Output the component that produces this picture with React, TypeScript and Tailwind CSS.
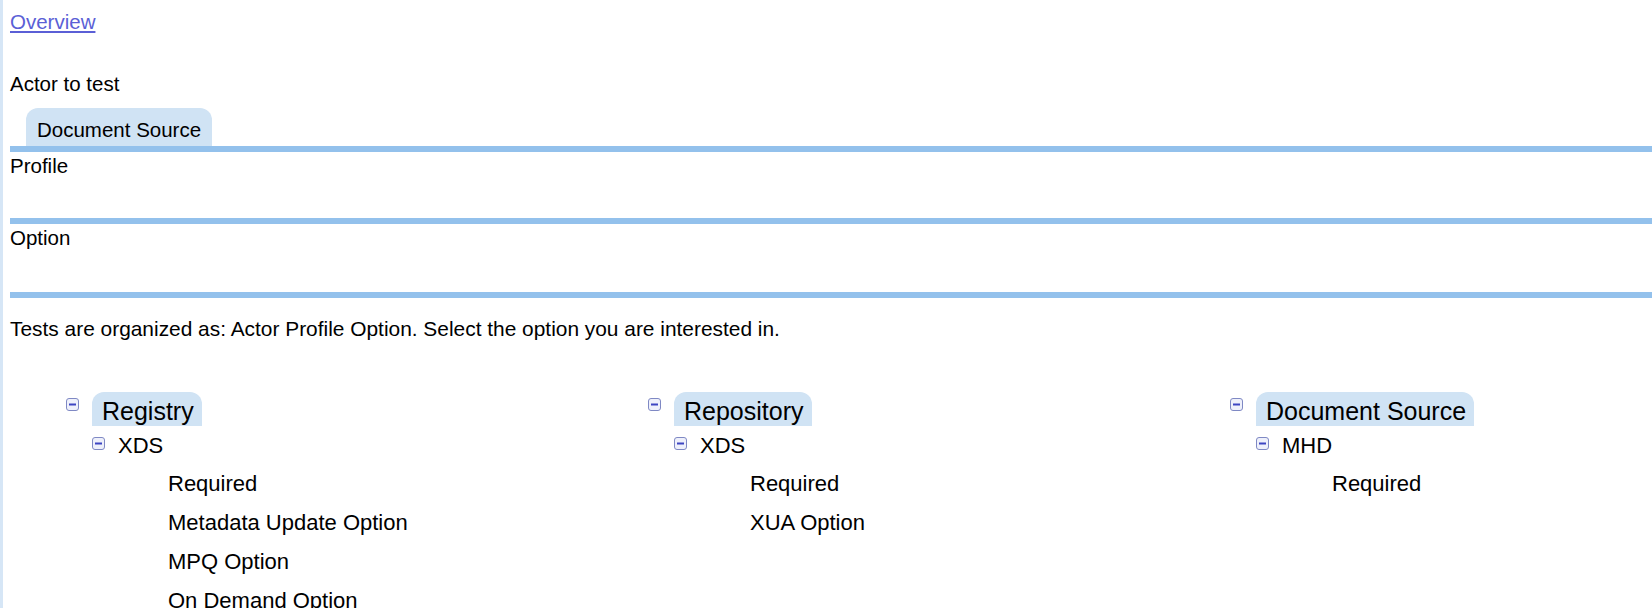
import React from "react";

const font = { fontFamily: '"Liberation Sans", Arial, Helvetica, sans-serif' };

function MinusIcon() {
  return (
    <svg width="13" height="13" viewBox="0 0 13 13" className="shrink-0">
      <rect x="0.5" y="0.5" width="12" height="12" rx="2.5" fill="#eef0fb" stroke="#7f89c4" />
      <rect x="3" y="5.5" width="7" height="2" fill="#3d45c2" />
    </svg>
  );
}

type Col = { title: string; group: string; items: string[] };

const cols: Col[] = [
  {
    title: "Registry",
    group: "XDS",
    items: ["Required", "Metadata Update Option", "MPQ Option", "On Demand Option"],
  },
  { title: "Repository", group: "XDS", items: ["Required", "XUA Option"] },
  { title: "Document Source", group: "MHD", items: ["Required"] },
];

function TreeCol({ col }: { col: Col }) {
  return (
    <div className="w-[582px] shrink-0">
      <div className="flex h-[41px] items-start">
        <div className="mt-[6px]">
          <MinusIcon />
        </div>
        <div className="ml-[13px] h-[34px] rounded-t-[12px] bg-[#d0e3f4] pl-[10px] pr-[8px] pt-[4px] text-[25px] leading-[30px] text-black">
          {col.title}
        </div>
      </div>
      <div className="pl-[26px]">
        <div className="flex h-[38px] items-start">
          <div className="mt-[4px]">
            <MinusIcon />
          </div>
          <span className="ml-[13px] text-[22px] leading-[26px] text-black">{col.group}</span>
        </div>
        {col.items.map((it) => (
          <div key={it} className="h-[39px] pl-[76px] text-[22px] leading-[26px] text-black">
            {it}
          </div>
        ))}
      </div>
    </div>
  );
}

export default function App() {
  return (
    <div
      className="h-[608px] w-full overflow-hidden border-l-[3px] border-[#d6e6f6] bg-white text-[20.5px] leading-[24px] text-black"
      style={font}
    >
      <div className="pl-[7px] pt-[10px]">
        <a href="#" className="text-[#5b5fd6] underline">
          Overview
        </a>
      </div>
      <div className="mt-[38px] pl-[7px]">Actor to test</div>
      <div className="ml-[7px] mt-[12px] flex border-b-[6px] border-[#93c1ec] pl-[16px]">
        <div className="rounded-t-[12px] bg-[#d0e3f4] px-[11px] pb-[4px] pt-[10px]">Document Source</div>
      </div>
      <div className="ml-[7px] h-[72px] border-b-[6px] border-[#93c1ec] pt-[2px]">Profile</div>
      <div className="ml-[7px] h-[74px] border-b-[6px] border-[#93c1ec] pt-[2px]">Option</div>
      <div className="mt-[19px] pl-[7px] text-[20.9px]">
        Tests are organized as: Actor Profile Option. Select the option you are interested in.
      </div>
      <div className="mt-[51px] flex pl-[63px]">
        {cols.map((c) => (
          <TreeCol key={c.title} col={c} />
        ))}
      </div>
    </div>
  );
}
